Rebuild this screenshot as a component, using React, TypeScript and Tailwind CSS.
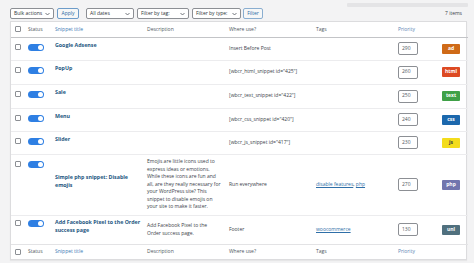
import React from 'react';

type Row = {
  title: string[];
  desc: string[];
  where: string;
  tags: string[];
  priority: string;
  type: string;
  badge: string;
  h: string;
  pt: string;
};

const rows: Row[] = [
  { title: ['Google Adsense'], desc: [], where: 'Insert Before Post', tags: [], priority: '290', type: 'ad', badge: 'bg-[#cf6a17] text-white', h: 'h-[23px]', pt: 'pt-[6px]' },
  { title: ['PopUp'], desc: [], where: '[wbcr_html_snippet id="425"]', tags: [], priority: '260', type: 'html', badge: 'bg-[#dd4a23] text-white', h: 'h-[24px]', pt: 'pt-[6px]' },
  { title: ['Sale'], desc: [], where: '[wbcr_text_snippet id="422"]', tags: [], priority: '250', type: 'text', badge: 'bg-[#3fa047] text-white', h: 'h-[24px]', pt: 'pt-[6px]' },
  { title: ['Menu'], desc: [], where: '[wbcr_css_snippet id="420"]', tags: [], priority: '240', type: 'css', badge: 'bg-[#1c68ad] text-white', h: 'h-[23px]', pt: 'pt-[6px]' },
  { title: ['Slider'], desc: [], where: '[wbcr_js_snippet id="417"]', tags: [], priority: '230', type: 'js', badge: 'bg-[#f3dc1c] text-[#3c3c3c]', h: 'h-[23px]', pt: 'pt-[6px]' },
  {
    title: ['Simple php snippet: Disable', 'emojis'],
    desc: [
      'Emojis are little icons used to',
      'express ideas or emotions.',
      'While these icons are fun and',
      'all, are they really necessary for',
      'your WordPress site? This',
      'snippet to disable emojis on',
      'your site to make it faster.',
    ],
    where: 'Run everywhere',
    tags: ['disable features', 'php'],
    priority: '270',
    type: 'php',
    badge: 'bg-[#7175ae] text-white',
    h: 'h-[61px]',
    pt: 'pt-[6px]',
  },
  {
    title: ['Add Facebook Pixel to the Order', 'success page'],
    desc: ['Add Facebook Pixel to the', 'Order success page.'],
    where: 'Footer',
    tags: ['woocommerce'],
    priority: '130',
    type: 'unl',
    badge: 'bg-[#50707e] text-white',
    h: 'h-[29px]',
    pt: 'pt-[4px]',
  },
];

function Chevron() {
  return (
    <svg className="w-[5px] h-[4px] text-[#50575e]" viewBox="0 0 10 6" fill="none" stroke="currentColor" strokeWidth={1.6}>
      <path d="M1 1l4 4 4-4" />
    </svg>
  );
}

function Select({ label, w }: { label: string; w: string }) {
  return (
    <div className={`${w} h-[11px] flex items-center justify-between px-[3px] bg-white border border-[#8c8f94] rounded-[2px] text-[#2c3338]`}>
      <span className="whitespace-nowrap">{label}</span>
      <Chevron />
    </div>
  );
}

function Checkbox() {
  return <div className="w-[6px] h-[6px] bg-white border border-[#8c8f94] rounded-[1px]" />;
}

function Toggle() {
  return (
    <div className="w-[16px] h-[7px] rounded-full bg-[#2e7fe3] flex items-center justify-end pr-[1px]">
      <div className="w-[5px] h-[5px] rounded-full bg-white" />
    </div>
  );
}

function HeadRow({ top }: { top?: boolean }) {
  const b = top ? 'border-b border-[#c3c4c7]' : 'border-t border-[#e3e3e5]';
  return (
    <tr className={`h-[15px] text-[#50575e] ${b}`}>
      <td className="pl-[4px] align-middle"><Checkbox /></td>
      <td className="pl-[3px] align-middle">Status</td>
      <td className="pl-[3px] align-middle text-[#3d7bb5]">Snippet title</td>
      <td className="pl-[3px] align-middle">Description</td>
      <td className="pl-[3px] align-middle">Where use?</td>
      <td className="pl-[3px] align-middle">Tags</td>
      <td className="pl-[3px] align-middle text-[#5a86b3]">Priority</td>
      <td />
    </tr>
  );
}

export default function App() {
  return (
    <div className="w-[474px] h-[263px] overflow-hidden bg-[#f3f3f4] text-[5px] text-[#3c434a]" style={{ fontFamily: '"Open Sans", "Noto Sans", Arial, sans-serif' }}>
      <div className="pt-[3px] flex justify-end pr-[6px]">
        <div className="w-[121px] h-[4px] rounded-[1px] bg-[#e4e4e6]" />
      </div>

      {/* toolbar */}
      <div className="mt-[1px] px-[10px] flex items-center h-[11px]">
        <Select label="Bulk actions" w="w-[44px]" />
        <div className="ml-[3px] w-[22px] h-[11px] flex items-center justify-center border border-[#6d9cc9] bg-[#f6f7f7] rounded-[2px] text-[#2a6aa5]">Apply</div>
        <div className="ml-[7px]"><Select label="All dates" w="w-[48px]" /></div>
        <div className="ml-[3px]"><Select label="Filter by tag:" w="w-[52px]" /></div>
        <div className="ml-[3px]"><Select label="Filter by type:" w="w-[49px]" /></div>
        <div className="ml-[2px] w-[20px] h-[11px] flex items-center justify-center border border-[#8aaed0] bg-[#f6f7f7] rounded-[2px] text-[#2a6aa5]">Filter</div>
        <div className="ml-auto pr-[2px] text-[#3c434a]">7 items</div>
      </div>

      {/* table */}
      <div className="mt-[2px] mx-[10px] w-[457px] bg-white border border-[#dcdcde] shadow-[0_1px_1px_rgba(0,0,0,0.05)]">
        <table className="w-full table-fixed border-collapse">
          <colgroup>
            <col className="w-[14px]" />
            <col className="w-[27px]" />
            <col className="w-[92px]" />
            <col className="w-[82px]" />
            <col className="w-[87px]" />
            <col className="w-[82px]" />
            <col className="w-[44px]" />
            <col className="w-[29px]" />
          </colgroup>
          <tbody>
            <HeadRow top />
            {rows.map((r, i) => (
              <tr key={i} className={`${r.h} ${i > 0 ? 'border-t border-[#ececee]' : ''}`}>
                <td className={`pl-[4px] align-top ${r.pt}`}><Checkbox /></td>
                <td className={`pl-[3px] align-top ${r.pt}`}><Toggle /></td>
                <td className="pl-[3px] align-middle">
                  <div className="leading-[8px] font-bold text-[5.3px] text-[#24577f]">
                    {r.title.map((t) => (
                      <div key={t} className="whitespace-nowrap">{t}</div>
                    ))}
                    <div className="h-[8px]" />
                  </div>
                </td>
                <td className="pl-[3px] align-middle">
                  <div className="leading-[7.6px]">
                    {r.desc.map((t) => (
                      <div key={t} className="whitespace-nowrap">{t}</div>
                    ))}
                  </div>
                </td>
                <td className="pl-[3px] align-middle whitespace-nowrap">{r.where}</td>
                <td className="pl-[3px] align-middle whitespace-nowrap">
                  {r.tags.map((t, j) => (
                    <span key={t}>
                      <span className="underline text-[#2f6fa8]">{t}</span>
                      {j < r.tags.length - 1 ? ', ' : ''}
                    </span>
                  ))}
                </td>
                <td className="pl-[3px] align-middle">
                  <div className="w-[20px] h-[13px] flex items-center pl-[3px] bg-white border border-[#8c8f94] rounded-[2px] text-[#50575e]">
                    {r.priority}
                  </div>
                </td>
                <td className="pl-[3px] align-middle">
                  <div className={`w-[18px] h-[10px] flex items-center justify-center rounded-[1px] font-bold ${r.badge}`}>
                    {r.type}
                  </div>
                </td>
              </tr>
            ))}
            <HeadRow />
          </tbody>
        </table>
      </div>
    </div>
  );
}
